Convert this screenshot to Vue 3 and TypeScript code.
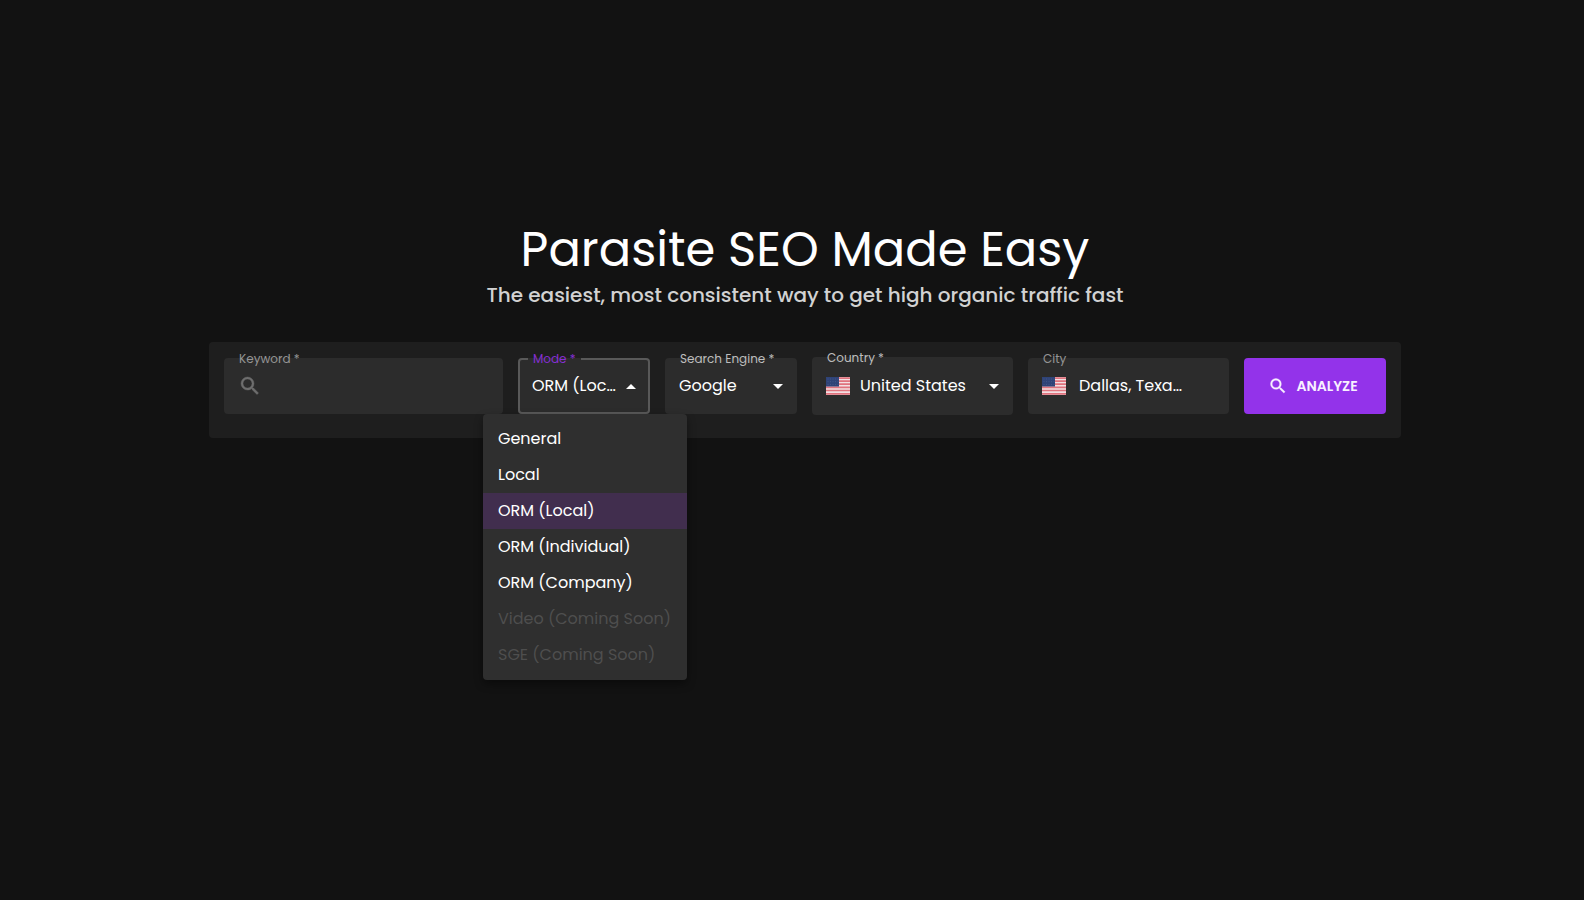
<script setup lang="ts">
import { ref } from 'vue'

interface ModeOption {
  label: string
  disabled?: boolean
}

const modes: ModeOption[] = [
  { label: 'General' },
  { label: 'Local' },
  { label: 'ORM (Local)' },
  { label: 'ORM (Individual)' },
  { label: 'ORM (Company)' },
  { label: 'Video (Coming Soon)', disabled: true },
  { label: 'SGE (Coming Soon)', disabled: true },
]

const keyword = ref('')
const mode = ref('ORM (Local)')
const engine = ref('Google')
const country = ref('United States')
const city = ref('Dallas, Texas, United States')
const menuOpen = ref(true)

function pick(option: ModeOption) {
  mode.value = option.label
  menuOpen.value = false
}
</script>

<template>
  <svg class="defs" aria-hidden="true">
    <symbol id="search" viewBox="0 0 24 24">
      <path d="M15.500 14h-.790l-.280-.270A6.470 6.470 0 0 0 16 9.500 6.500 6.500 0 1 0 9.500 16c1.610 0 3.090-.590 4.230-1.570l.270.280v.790l5 4.990L20.490 19l-4.990-5zm-6 0C7.010 14 5 11.990 5 9.500S7.010 5 9.500 5 14 7.010 14 9.500 11.990 14 9.500 14z" stroke="currentColor" stroke-width="0.400" />
    </symbol>
    <symbol id="flag" viewBox="0 0 24 18">
      <rect width="24" height="18" fill="#f3dfe2" />
      <path d="M0 1.200h24M0 4.200h24M0 7.200h24M0 10.400h24M0 13.500h24M0 16.800h24" stroke="#e0737e" stroke-width="1.700" />
      <rect width="13" height="9.500" fill="#2f4377" />
      <path d="M1.500 2h11M1.500 4.700h11M1.500 7.400h11" stroke="#4e608f" stroke-width="0.700" stroke-dasharray="1 1.500" />
    </symbol>
  </svg>

  <main class="page">
    <h1>Parasite SEO Made Easy</h1>
    <p class="tagline">The easiest, most consistent way to get high organic traffic fast</p>

    <form class="panel" @submit.prevent>
      <div class="field keyword">
        <label for="keyword">Keyword *</label>
        <svg class="lens"><use href="#search" /></svg>
        <input id="keyword" v-model="keyword" type="text" required />
      </div>

      <div class="field mode" :class="{ open: menuOpen }">
        <label for="mode">Mode *</label>
        <select id="mode" v-model="mode" @mousedown.prevent="menuOpen = !menuOpen">
          <option v-for="m in modes" :key="m.label" :disabled="m.disabled">{{ m.label }}</option>
        </select>
        <svg class="caret" viewBox="0 0 10 5"><path d="M0 5 5 0l5 5z" /></svg>
        <ul v-if="menuOpen" class="menu">
          <li v-for="m in modes" :key="m.label">
            <button type="button" :disabled="m.disabled" :class="{ selected: m.label === mode }" @click="pick(m)">
              {{ m.label }}
            </button>
          </li>
        </ul>
      </div>

      <div class="field engine">
        <label for="engine">Search Engine *</label>
        <select id="engine" v-model="engine">
          <option>Google</option>
        </select>
        <svg class="caret" viewBox="0 0 10 5"><path d="M0 0 5 5l5-5z" /></svg>
      </div>

      <div class="field country">
        <label for="country">Country *</label>
        <svg class="flag"><use href="#flag" /></svg>
        <select id="country" v-model="country">
          <option>United States</option>
        </select>
        <svg class="caret" viewBox="0 0 10 5"><path d="M0 0 5 5l5-5z" /></svg>
      </div>

      <div class="field city">
        <label for="city">City</label>
        <svg class="flag"><use href="#flag" /></svg>
        <input id="city" v-model="city" type="text" />
      </div>

      <button class="analyze" type="submit">
        <svg><use href="#search" /></svg>
        ANALYZE
      </button>
    </form>
  </main>
</template>

<style>
body {
  background: #121212;
}
</style>

<style scoped>
* {
  box-sizing: border-box;
}
.defs {
  position: absolute;
  width: 0;
  height: 0;
}
.page {
  min-height: 100vh;
  padding: 218px 16px 16px 42px;
  color: #fff;
  font-family: Poppins, Inter, "Liberation Sans", sans-serif;
}
h1 {
  margin: 0;
  font-size: 48px;
  line-height: 64px;
  font-weight: 400;
  text-align: center;
}
.tagline {
  margin: 0;
  font-size: 20px;
  line-height: 26px;
  font-weight: 500;
  text-align: center;
  color: #d2d2d2;
}
.panel {
  display: flex;
  gap: 15px;
  max-width: 1192px;
  margin: 34px auto 0;
  padding: 16px 15px 24px;
  background: #1e1e1e;
  border-radius: 4px;
}
.field {
  position: relative;
  display: flex;
  align-items: center;
  min-width: 0;
  height: 56px;
  padding: 0 14px;
  background: #2c2c2c;
  border-radius: 4px;
}
.keyword {
  flex: 1 1 279px;
}
.mode,
.engine {
  flex: 0 1 132px;
}
.country,
.city {
  flex: 0 1 201px;
}
.country {
  height: 58px;
  margin: -1px 0;
}
label {
  position: absolute;
  top: -7px;
  left: 15px;
  font-size: 12px;
  line-height: 16px;
  white-space: nowrap;
  color: #bdbdbd;
}
.keyword label,
.city label {
  color: #959595;
}
.open {
  box-shadow: inset 0 0 0 2px #595959;
}
.open label {
  left: 10px;
  padding: 0 5px;
  color: #862fd4;
  background: linear-gradient(#2c2c2c, #2c2c2c) 0 7px / 100% 2px no-repeat;
}
input,
select {
  appearance: none;
  flex: 1;
  min-width: 0;
  width: 0;
  height: 24px;
  padding: 0;
  border: 0;
  outline: 0;
  background: none;
  color: #fff;
  font: 400 16px/24px Poppins, Inter, "Liberation Sans", sans-serif;
  text-overflow: ellipsis;
}
.lens {
  width: 24px;
  height: 24px;
  color: #6e6e6e;
  fill: currentColor;
}
.flag {
  flex: none;
  width: 24px;
  height: 18px;
  margin-right: 10px;
}
.city .flag {
  margin-right: 13px;
}
.city input {
  margin-right: 30px;
}
.caret {
  flex: none;
  width: 10px;
  height: 5px;
  margin-left: 8px;
  fill: #fff;
}
.menu {
  position: absolute;
  z-index: 1;
  top: 56px;
  left: -35px;
  margin: 0;
  padding: 7px 0;
  min-width: 204px;
  list-style: none;
  background: #2f2f2f;
  border-radius: 4px;
  box-shadow: 0 4px 8px rgba(0, 0, 0, 0.4);
}
.menu button {
  display: block;
  width: 100%;
  height: 36px;
  padding: 0 15px;
  border: 0;
  background: none;
  color: #fff;
  font: 400 16px/24px Poppins, Inter, "Liberation Sans", sans-serif;
  text-align: left;
  white-space: nowrap;
}
.menu button.selected {
  background: #412e4e;
}
.menu button:disabled {
  color: #4e4e4e;
}
.analyze {
  display: flex;
  flex: 0 0 142px;
  align-items: center;
  justify-content: center;
  gap: 8px;
  height: 56px;
  padding: 0 4px 0 0;
  border: 0;
  border-radius: 4px;
  background: #9333ea;
  color: #f8f0ff;
  font: 600 14px/24px Poppins, Inter, "Liberation Sans", sans-serif;
}
.analyze svg {
  width: 20px;
  height: 20px;
  fill: currentColor;
}
</style>
